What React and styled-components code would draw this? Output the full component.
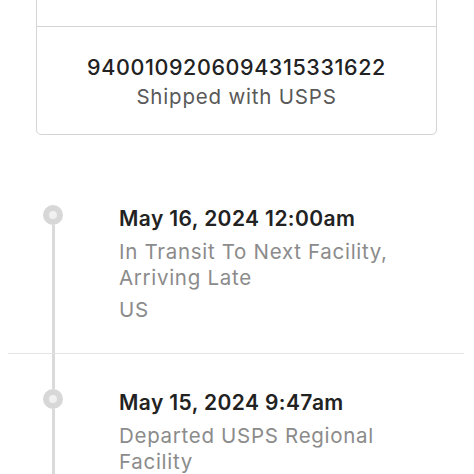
import React from 'react'
import styled, { createGlobalStyle } from 'styled-components'

const GlobalStyle = createGlobalStyle`
  html, body {
    margin: 0;
    padding: 0;
    background: #fff;
    overflow: hidden;
  }
  body {
    font-family: Inter, "Noto Sans", "Liberation Sans", sans-serif;
    color: #222;
  }
`

const Page = styled.div`
  width: 474px;
  height: 474px;
  overflow: hidden;
`

const Card = styled.div`
  margin: -60px 37px 0 36px;
  border: 1px solid #d4d4d4;
  border-radius: 5px;
`

const CardSection = styled.div`
  display: flex;
  flex-direction: column;
  align-items: center;
  justify-content: ${({ $end }) => ($end ? 'flex-end' : 'center')};
  box-sizing: border-box;
  height: ${({ $h }) => $h}px;
  padding-bottom: ${({ $pb }) => $pb || 0}px;
  border-top: ${({ $divided }) => ($divided ? '1px solid #d4d4d4' : 'none')};
`

const Faded = styled.div`
  font-size: 20px;
  line-height: 26px;
  letter-spacing: 0.6px;
  color: #595959;
`

const Tracking = styled.div`
  font-size: 21.5px;
  font-weight: 500;
  letter-spacing: 0.6px;
  line-height: 30px;
  color: #222;
`

const Carrier = styled.div`
  font-size: 20.5px;
  line-height: 26px;
  letter-spacing: 0.8px;
  margin-top: 2px;
  color: #595959;
`

const Timeline = styled.div`
  margin: 35px 10px 0 8px;
`

const Event = styled.div`
  display: grid;
  grid-template-columns: 90px 1fr;
  column-gap: 21px;
  border-bottom: ${({ $last }) => ($last ? 'none' : '1px solid #e4e4e4')};
`

const Rail = styled.div`
  display: flex;
  flex-direction: column;
  align-items: center;
`

const Segment = styled.div`
  width: 3px;
  background: ${({ $hidden }) => ($hidden ? 'transparent' : '#dadada')};
  height: ${({ $h }) => ($h ? `${$h}px` : 'auto')};
  flex: ${({ $h }) => ($h ? 'none' : 1)};
`

const Dot = styled.div`
  width: 20px;
  height: 20px;
  box-sizing: border-box;
  border-radius: 50%;
  border: 6px solid #d7d7d7;
  background: #f0f0f0;
  flex: none;
`

const Body = styled.div`
  padding: 36px 0 30px;
`

const When = styled.div`
  font-size: 21px;
  font-weight: 600;
  line-height: 26px;
  color: #222;
  letter-spacing: 0.4px;
`

const Line = styled.div`
  font-size: 20.5px;
  line-height: 26px;
  letter-spacing: 0.7px;
  color: #8b8b8b;
  margin-top: ${({ $gap }) => $gap || 0}px;
`

const events = [
  {
    when: 'May 16, 2024 12:00am',
    what: ['In Transit To Next Facility,', 'Arriving Late'],
    where: 'US',
  },
  {
    when: 'May 15, 2024 9:47am',
    what: ['Departed USPS Regional', 'Facility'],
    where: 'US',
  },
]

export default function App() {
  return (
    <Page>
      <GlobalStyle />
      <Card>
        <CardSection $h={85} $end $pb={25}>
          <Faded>Expected May 21</Faded>
        </CardSection>
        <CardSection $divided $h={108}>
          <Tracking>9400109206094315331622</Tracking>
          <Carrier>Shipped with USPS</Carrier>
        </CardSection>
      </Card>
      <Timeline>
        {events.map((e, i) => (
          <Event key={i} $last={i === events.length - 1}>
            <Rail>
              <Segment $h={35} $hidden={i === 0} />
              <Dot />
              <Segment />
            </Rail>
            <Body>
              <When>{e.when}</When>
              <Line $gap={7}>{e.what[0]}</Line>
              <Line>{e.what[1]}</Line>
              <Line $gap={6}>{e.where}</Line>
            </Body>
          </Event>
        ))}
      </Timeline>
    </Page>
  )
}
